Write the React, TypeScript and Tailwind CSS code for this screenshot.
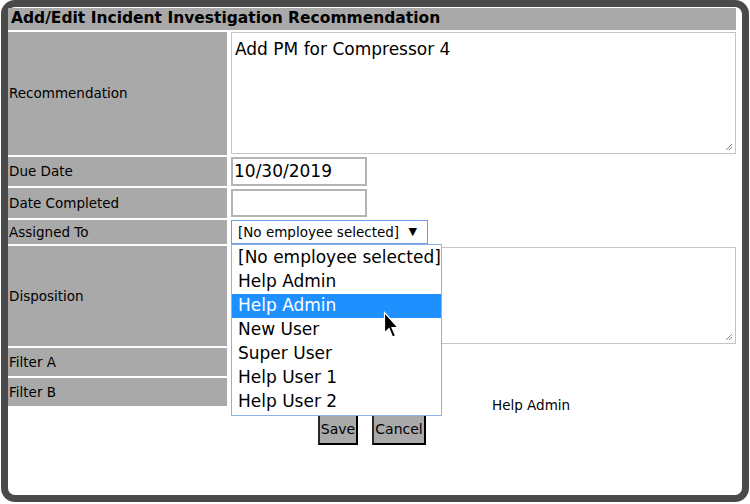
const font = { fontFamily: '"DejaVu Sans", Verdana, sans-serif' };

const employees = [
  "[No employee selected]",
  "Help Admin",
  "Help Admin",
  "New User",
  "Super User",
  "Help User 1",
  "Help User 2",
];

function ResizeGrip() {
  return (
    <svg className="absolute bottom-[2px] right-[2px]" width="9" height="9" viewBox="0 0 9 9">
      <path d="M8 2 L2 8 M8 5 L5 8" stroke="#888" strokeWidth="1" />
    </svg>
  );
}

function Label({ children }: { children: React.ReactNode }) {
  return (
    <div className="flex items-center bg-[#a9a9a9] pl-[1px] text-[13.5px] text-black">
      {children}
    </div>
  );
}

export default function App() {
  return (
    <div className="relative h-[504px] w-[750px] overflow-hidden bg-white" style={font}>
      <div className="ml-px h-[502px] w-[748px] rounded-[14px] border-[7px] border-[#4a4a4a] bg-white">
        <div className="mt-px flex w-[728px] flex-col gap-[2px]">
          <div className="flex h-[22px] items-center bg-[#a9a9a9] pl-[3px] text-[15.5px] font-bold text-black">
            Add/Edit Incident Investigation Recommendation
          </div>

          <div className="grid grid-cols-[219px_506px] gap-x-[3px] gap-y-[2px]">
            <div className="flex h-[123px] items-center bg-[#a9a9a9] pl-[1px] text-[13.5px]">Recommendation</div>
            <div className="pl-px">
              <div className="relative h-[122px] w-[505px] border border-[#c4c4c4] px-[3px] pt-[4px] text-[17px] text-black">
                Add PM for Compressor 4
                <ResizeGrip />
              </div>
            </div>

            <div className="h-[29px]">
              <Label>
                <span className="h-[29px] leading-[29px]">Due Date</span>
              </Label>
            </div>
            <div className="pl-px">
              <div className="flex h-[29px] w-[136px] items-center border-2 border-[#b4b4b4] pl-[1px] text-[17px]">
                10/30/2019
              </div>
            </div>

            <div className="h-[30px]">
              <Label>
                <span className="h-[30px] leading-[30px]">Date Completed</span>
              </Label>
            </div>
            <div className="pl-px pt-px">
              <div className="h-[28px] w-[136px] border-2 border-[#b4b4b4]" />
            </div>

            <div className="h-[24px]">
              <Label>
                <span className="h-[24px] leading-[24px]">Assigned To</span>
              </Label>
            </div>
            <div className="relative pl-px">
              <div className="flex h-[24px] w-[197px] items-center justify-between border border-[#6f9ae8] pl-[6px] pr-[10px] text-[13.5px]">
                <span>[No employee selected]</span>
                <span className="text-[11px]">▼</span>
              </div>
              <div className="absolute left-px top-[24px] z-10 w-[211px] border border-[#90b0e8] bg-white py-px">
                {employees.map((name, i) => (
                  <div
                    key={i}
                    className={
                      "flex h-[24px] items-center pl-[6px] text-[17px] " +
                      (i === 2 ? "bg-[#1e90ff] text-white" : "text-black")
                    }
                  >
                    {name}
                  </div>
                ))}
              </div>
            </div>

            <div className="flex h-[100px] items-center bg-[#a9a9a9] pl-[1px] text-[13.5px]">Disposition</div>
            <div className="pl-px pt-px">
              <div className="relative h-[97px] w-[505px] border border-[#c4c4c4]">
                <ResizeGrip />
              </div>
            </div>

            <div className="flex h-[28px] items-center bg-[#a9a9a9] pl-[1px] text-[13.5px]">Filter A</div>
            <div />

            <div className="flex h-[28px] items-center bg-[#a9a9a9] pl-[1px] text-[13.5px]">Filter B</div>
            <div className="relative">
              <span className="absolute left-[262px] top-[17px] text-[13.5px]">Help Admin</span>
            </div>
          </div>

          <div className="mt-[5px] flex justify-center gap-[14px]">
            <button className="h-[32px] w-[40px] border-2 border-[#2a2a2a] border-b-[#000] border-r-[#000] bg-[#a9a9a9] text-[14px]">
              Save
            </button>
            <button className="h-[32px] w-[54px] border-2 border-[#2a2a2a] border-b-[#000] border-r-[#000] bg-[#a9a9a9] text-[14px]">
              Cancel
            </button>
          </div>
        </div>
      </div>

      <svg className="absolute left-[383px] top-[311px] z-20" width="18" height="30" viewBox="0 0 18 30">
        <path
          d="M1.5 1.5 L1.5 22 L6 17.5 L9.5 26 L12.5 24.8 L9 16.5 L15 16.5 Z"
          fill="#000"
          stroke="#fff"
          strokeWidth="1.2"
          strokeLinejoin="miter"
        />
      </svg>
    </div>
  );
}
